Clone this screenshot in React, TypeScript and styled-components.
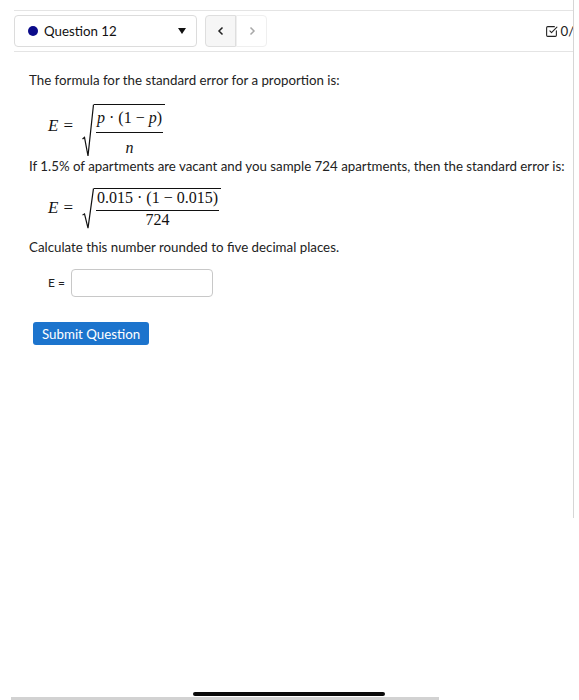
import React from 'react';
import styled, { createGlobalStyle } from 'styled-components';
import { SquareCheckBig } from 'lucide-react';

const GlobalStyle = createGlobalStyle`
  html, body {
    margin: 0;
    padding: 0;
    background: #ffffff;
  }
  body {
    font-family: Lato, "Open Sans", sans-serif;
    color: #222222;
  }
`;

const Page = styled.div`
  width: 579px;
  height: 700px;
  display: flex;
  flex-direction: column;
  overflow: hidden;
`;

const Main = styled.div`
  width: 574px;
  height: 518px;
  border-right: 1px solid #d6d6d6;
  padding-top: 10px;
  box-sizing: border-box;
  overflow: hidden;
`;

const Header = styled.div`
  margin-left: 14px;
  height: 42px;
  box-sizing: border-box;
  border-top: 1px solid #e4e4e4;
  border-bottom: 1px solid #e4e4e4;
  display: flex;
  align-items: center;
  white-space: nowrap;
`;

const QuestionSelect = styled.div`
  width: 183px;
  height: 32px;
  box-sizing: border-box;
  border: 1px solid #dcdcdc;
  border-radius: 4px;
  display: flex;
  align-items: center;
  padding: 0 10px 0 13px;
  font-size: 13.3px;
  color: #111;
`;

const Dot = styled.span`
  width: 10px;
  height: 10px;
  border-radius: 50%;
  background: #0b0b8a;
  margin-right: 6px;
  flex-shrink: 0;
`;

const Caret = styled.span`
  margin-left: auto;
  width: 0;
  height: 0;
  border-left: 4px solid transparent;
  border-right: 4px solid transparent;
  border-top: 6px solid #111;
`;

const NavGroup = styled.div`
  display: flex;
  margin-left: 8px;
`;

const NavButton = styled.div<{ $active?: boolean }>`
  width: 31px;
  height: 32px;
  box-sizing: border-box;
  display: flex;
  align-items: center;
  justify-content: center;
  border: 1px solid ${p => (p.$active ? '#dedede' : '#efefef')};
  background: ${p => (p.$active ? '#f6f6f6' : '#ffffff')};
  border-radius: ${p => (p.$active ? '4px 0 0 4px' : '0 4px 4px 0')};
  color: ${p => (p.$active ? '#222' : '#a8a8a8')};
`;

const Score = styled.div`
  margin-left: auto;
  margin-right: -9px;
  display: flex;
  align-items: center;
  gap: 3px;
  font-size: 13.3px;
  color: #222;
`;

const Content = styled.div`
  padding: 19px 0 0 29px;
  font-size: 13.3px;
  line-height: 18px;
  white-space: nowrap;
`;

const Para = styled.p<{ $top?: number }>`
  margin: ${p => p.$top ?? 0}px 0 0 0;
`;

const Formula = styled.div<{ $top: number }>`
  display: flex;
  align-items: center;
  margin: ${p => p.$top}px 0 0 19px;
  font-family: "Liberation Serif", "DejaVu Serif", serif;
  font-size: 16px;
  color: #111;
`;

const Lhs = styled.div<{ $lift: number }>`
  display: flex;
  align-items: center;
  margin-bottom: ${p => p.$lift}px;
  font-size: 17px;
`;

const MathVar = styled.span`
  font-style: italic;
`;

const Equals = styled.span`
  margin: 0 9px 0 5px;
`;

const Radical = styled.div`
  display: flex;
  align-items: stretch;
`;

const SignBox = styled.div`
  position: relative;
  width: 12px;
  flex-shrink: 0;
`;

const RadicalSign = styled.svg`
  position: absolute;
  inset: 0;
  width: 100%;
  height: 100%;
`;

const Radicand = styled.div<{ $pad: number }>`
  border-top: 1px solid #111;
  padding: ${p => p.$pad}px 2px 0 2px;
`;

const Fraction = styled.div`
  display: flex;
  flex-direction: column;
  align-items: center;
`;

const Numerator = styled.div<{ $gap: number }>`
  padding: 0 1px ${p => p.$gap}px;
  border-bottom: 1px solid #111;
  line-height: ${p => (p.$gap > 3 ? 20 : 18)}px;
`;

const Denominator = styled.div<{ $gap: number }>`
  padding-top: ${p => p.$gap}px;
  line-height: 18px;
`;

const AnswerRow = styled.div`
  display: flex;
  align-items: center;
  margin: 13px 0 0 19px;
  font-size: 12px;
`;

const AnswerInput = styled.div`
  width: 142px;
  height: 28px;
  box-sizing: border-box;
  margin-left: 6px;
  border: 1px solid #c8c8c8;
  border-radius: 4px;
`;

const SubmitButton = styled.div`
  display: inline-flex;
  align-items: center;
  margin: 25px 0 0 4px;
  height: 23px;
  padding: 0 9px 0 9px;
  background: #1c74cd;
  border-radius: 3px;
  color: #ffffff;
  font-size: 13.3px;
`;

const Footer = styled.div`
  margin-top: auto;
  display: flex;
  flex-direction: column;
  gap: 1px;
`;

const HomeIndicator = styled.div`
  margin-left: 193px;
  width: 192px;
  height: 4px;
  border-radius: 2px;
  background: #0a0a0a;
`;

const BottomEdge = styled.div`
  margin-left: 11px;
  width: 428px;
  height: 3px;
  background: #d2d2d2;
`;

const Sqrt: React.FC<{ pad: number; children: React.ReactNode }> = ({ pad, children }) => (
  <Radical>
    <SignBox>
      <RadicalSign viewBox="0 0 12 50" preserveAspectRatio="none">
        <path d="M0.5 33 L2.5 31.5 L6 49 L11.5 0.5" fill="none" stroke="#111" strokeWidth="1.2" />
      </RadicalSign>
    </SignBox>
    <Radicand $pad={pad}>{children}</Radicand>
  </Radical>
);

const Chevron: React.FC<{ dir: 'left' | 'right' }> = ({ dir }) => (
  <svg width="8" height="10" viewBox="0 0 8 10">
    <path
      d={dir === 'left' ? 'M5.5 1.5 L2 5 L5.5 8.5' : 'M2.5 1.5 L6 5 L2.5 8.5'}
      fill="none"
      stroke="currentColor"
      strokeWidth="1.5"
    />
  </svg>
);

export default function App() {
  return (
    <Page>
      <GlobalStyle />
      <Main>
        <Header>
          <QuestionSelect>
            <Dot />
            Question 12
            <Caret />
          </QuestionSelect>
          <NavGroup>
            <NavButton $active>
              <Chevron dir="left" />
            </NavButton>
            <NavButton>
              <Chevron dir="right" />
            </NavButton>
          </NavGroup>
          <Score>
            <SquareCheckBig size={13} strokeWidth={2} />
            0/1
          </Score>
        </Header>

        <Content>
          <Para>The formula for the standard error for a proportion is:</Para>
          <Formula $top={15}>
            <Lhs $lift={10}>
              <MathVar>E</MathVar>
              <Equals>=</Equals>
            </Lhs>
            <Sqrt pad={3}>
              <Fraction>
                <Numerator $gap={4}>
                  <MathVar>p</MathVar> · (1 − <MathVar>p</MathVar>)
                </Numerator>
                <Denominator $gap={6}>
                  <MathVar>n</MathVar>
                </Denominator>
              </Fraction>
            </Sqrt>
          </Formula>

          <Para $top={0}>
            If 1.5% of apartments are vacant and you sample 724 apartments, then the standard error is:
          </Para>
          <Formula $top={13}>
            <Lhs $lift={2}>
              <MathVar>E</MathVar>
              <Equals>=</Equals>
            </Lhs>
            <Sqrt pad={0}>
              <Fraction>
                <Numerator $gap={3}>0.015 · (1 − 0.015)</Numerator>
                <Denominator $gap={0}>724</Denominator>
              </Fraction>
            </Sqrt>
          </Formula>

          <Para $top={9}>Calculate this number rounded to five decimal places.</Para>
          <AnswerRow>
            E =
            <AnswerInput />
          </AnswerRow>
          <SubmitButton>Submit Question</SubmitButton>
        </Content>
      </Main>
      <Footer>
        <HomeIndicator />
        <BottomEdge />
      </Footer>
    </Page>
  );
}
